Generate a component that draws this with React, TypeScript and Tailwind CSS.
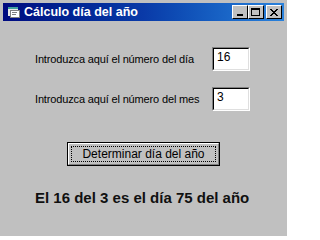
import React from 'react'

function TitleButton({ kind }: { kind: 'min' | 'max' | 'close' }) {
  return (
    <div className="w-[16px] h-[14px] bg-[#c0c0c0] border border-t-white border-l-white border-b-black border-r-black flex items-center justify-center">
      <svg width="10" height="9" viewBox="0 0 10 9" shapeRendering="crispEdges">
        {kind === 'min' && <rect x="2" y="6" width="6" height="2" fill="#000" />}
        {kind === 'max' && (
          <>
            <rect x="0.5" y="0.5" width="8" height="7" fill="none" stroke="#000" />
            <rect x="0" y="0" width="9" height="2" fill="#000" />
          </>
        )}
        {kind === 'close' && (
          <path d="M1 1 L8 8 M2 1 L9 8 M8 1 L1 8 M9 1 L2 8" stroke="#000" strokeWidth="1" />
        )}
      </svg>
    </div>
  )
}

function TextBox({ value }: { value: string }) {
  return (
    <div className="w-[38px] h-[24px] border border-t-[#808080] border-l-[#808080] border-b-white border-r-white">
      <div className="w-full h-full bg-white border border-t-black border-l-black border-b-[#dfdfdf] border-r-[#dfdfdf] px-[3px] pt-[1px] text-[12px] leading-[14px] text-black">
        {value}
      </div>
    </div>
  )
}

export default function App() {
  return (
    <div
      className="w-[287px] h-[236px] bg-[#c0c0c0] p-[3px] flex flex-col overflow-hidden"
      style={{ fontFamily: '"Liberation Sans", Arial, sans-serif' }}
    >
      {/* Title bar */}
      <div className="h-[18px] bg-gradient-to-r from-[#000a80] via-[#0a3aa8] to-[#2a82dc] flex items-center pl-[4px] pr-[2px]">
        <svg width="14" height="12" viewBox="0 0 14 12" shapeRendering="crispEdges">
          <rect x="1" y="1" width="10" height="9" fill="#e8e8e8" />
          <rect x="1" y="1" width="10" height="2" fill="#40a0a0" />
          <rect x="3" y="4" width="9" height="7" fill="#ffffff" stroke="#808080" strokeWidth="1" />
          <rect x="5" y="6" width="5" height="1" fill="#808080" />
          <rect x="5" y="8" width="4" height="1" fill="#808080" />
        </svg>
        <span className="ml-[3px] text-white font-bold text-[12.5px] leading-none">Cálculo día del año</span>
        <div className="ml-auto flex">
          <TitleButton kind="min" />
          <TitleButton kind="max" />
          <div className="ml-[2px]">
            <TitleButton kind="close" />
          </div>
        </div>
      </div>

      {/* Form */}
      <div className="flex flex-col pl-[32px] pt-[26px] text-[11px] text-black">
        <div className="flex items-center">
          <span className="w-[177px] tracking-[-0.15px]">Introduzca aquí el número del día</span>
          <TextBox value="16" />
        </div>
        <div className="flex items-center mt-[16px]">
          <span className="w-[177px] tracking-[-0.15px]">Introduzca aquí el número del mes</span>
          <TextBox value="3" />
        </div>

        <div className="mt-[31px] ml-[32px] w-[153px] h-[24px] border border-black">
          <div className="w-full h-full border border-t-white border-l-white border-b-[#808080] border-r-[#808080] p-[2px]">
            <div className="w-full h-full border border-dotted border-black flex items-center justify-center text-[12px]">
              Determinar día del año
            </div>
          </div>
        </div>

        <div className="mt-[21px] font-bold text-[15px] text-[#101010]">
          El 16 del 3 es el día 75 del año
        </div>
      </div>
    </div>
  )
}
